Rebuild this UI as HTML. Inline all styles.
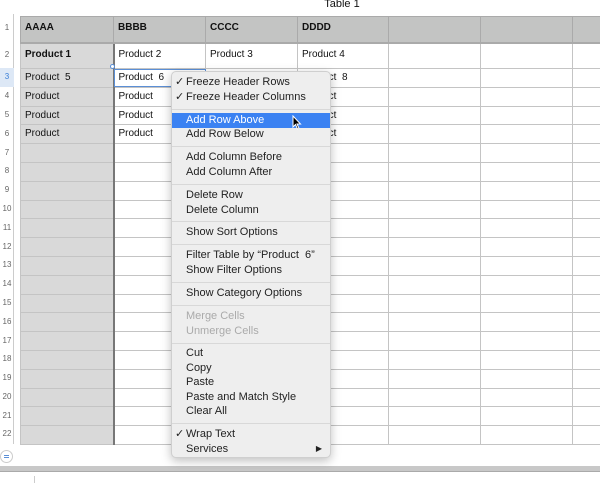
<!DOCTYPE html>
<html><head><style>
*{margin:0;padding:0;box-sizing:border-box}
body{width:600px;height:483px;background:#fff;font-family:"Liberation Sans",sans-serif;position:relative;overflow:hidden;font-size:10px;color:#111}
.abs{position:absolute}
table{position:absolute;left:20px;top:16px;border-collapse:collapse;table-layout:fixed;width:644px}
td{border:1px solid #c4c4c4;padding:0 4px;vertical-align:top;white-space:nowrap;overflow:hidden;height:18.8px;line-height:17px}
td.h{background:#c3c4c3;font-weight:bold;height:26px;line-height:22px;border-bottom:2px solid #888;border-color:#aaa}
td.c1{background:#d9d9d9}
td.c2{border-left:2px solid #777}
tr.r2 td{height:26px;line-height:22px}
.rn{position:absolute;left:0;width:14px;text-align:center;font-size:8px;color:#666}
.menu{position:absolute;left:171px;top:71px;width:160px;height:387px;background:#eeeeee;border:1px solid #cfcfcf;border-radius:5px;box-shadow:0 3px 10px rgba(0,0,0,.25);font-size:11px;color:#222}
.mi{position:absolute;left:0;right:0;height:14.5px;line-height:14.5px;padding-left:14px}
.mi.d{color:#aaa}
.sep{position:absolute;left:0;right:0;height:1px;background:#d8d8d8}
.hl{background:#3b82f2;color:#fff}
</style></head><body>
<div class="abs" style="top:-2px;left:42px;width:600px;text-align:center;font-size:11px">Table 1</div>
<div class="abs" style="left:0;top:14px;width:14px;height:430px;border-right:1px solid #ccc"></div>
<div class="abs" style="left:0;top:68px;width:14px;height:19px;background:#dde8f6"></div>
<table>
<colgroup><col style="width:93px"><col style="width:92px"><col style="width:92px"><col style="width:91px"><col style="width:92px"><col style="width:92px"><col style="width:92px"></colgroup>
<tr><td class="h">AAAA</td><td class="h">BBBB</td><td class="h">CCCC</td><td class="h">DDDD</td><td class="h"></td><td class="h"></td><td class="h"></td></tr>
<tr class="r2"><td class="c1" style="font-weight:bold">Product 1</td><td class="c2">Product 2</td><td>Product 3</td><td>Product 4</td><td></td><td></td><td></td></tr>
<tr><td class="c1">Product&nbsp; 5</td><td class="c2" style="outline:1px solid #5b8fd6;outline-offset:-1px">Product&nbsp; 6</td><td></td><td>Product&nbsp; 8</td><td></td><td></td><td></td></tr>
<tr><td class="c1">Product</td><td class="c2">Product</td><td></td><td>Product</td><td></td><td></td><td></td></tr>
<tr><td class="c1">Product</td><td class="c2">Product</td><td></td><td>Product</td><td></td><td></td><td></td></tr>
<tr><td class="c1">Product</td><td class="c2">Product</td><td></td><td>Product</td><td></td><td></td><td></td></tr>
<tr><td class="c1"></td><td class="c2"></td><td></td><td></td><td></td><td></td><td></td></tr>
<tr><td class="c1"></td><td class="c2"></td><td></td><td></td><td></td><td></td><td></td></tr>
<tr><td class="c1"></td><td class="c2"></td><td></td><td></td><td></td><td></td><td></td></tr>
<tr><td class="c1"></td><td class="c2"></td><td></td><td></td><td></td><td></td><td></td></tr>
<tr><td class="c1"></td><td class="c2"></td><td></td><td></td><td></td><td></td><td></td></tr>
<tr><td class="c1"></td><td class="c2"></td><td></td><td></td><td></td><td></td><td></td></tr>
<tr><td class="c1"></td><td class="c2"></td><td></td><td></td><td></td><td></td><td></td></tr>
<tr><td class="c1"></td><td class="c2"></td><td></td><td></td><td></td><td></td><td></td></tr>
<tr><td class="c1"></td><td class="c2"></td><td></td><td></td><td></td><td></td><td></td></tr>
<tr><td class="c1"></td><td class="c2"></td><td></td><td></td><td></td><td></td><td></td></tr>
<tr><td class="c1"></td><td class="c2"></td><td></td><td></td><td></td><td></td><td></td></tr>
<tr><td class="c1"></td><td class="c2"></td><td></td><td></td><td></td><td></td><td></td></tr>
<tr><td class="c1"></td><td class="c2"></td><td></td><td></td><td></td><td></td><td></td></tr>
<tr><td class="c1"></td><td class="c2"></td><td></td><td></td><td></td><td></td><td></td></tr>
<tr><td class="c1"></td><td class="c2"></td><td></td><td></td><td></td><td></td><td></td></tr>
<tr><td class="c1"></td><td class="c2"></td><td></td><td></td><td></td><td></td><td></td></tr>
</table>
<div class="rn" style="top:23px">1</div><div class="rn" style="top:50px">2</div>
<div class="rn" style="top:72px;color:#3b7fd6">3</div><div class="rn" style="top:91px">4</div><div class="rn" style="top:110px">5</div><div class="rn" style="top:129px">6</div><div class="rn" style="top:148px">7</div><div class="rn" style="top:166px">8</div><div class="rn" style="top:185px">9</div><div class="rn" style="top:204px">10</div><div class="rn" style="top:223px">11</div><div class="rn" style="top:242px">12</div><div class="rn" style="top:260px">13</div><div class="rn" style="top:279px">14</div><div class="rn" style="top:298px">15</div><div class="rn" style="top:317px">16</div><div class="rn" style="top:336px">17</div><div class="rn" style="top:354px">18</div><div class="rn" style="top:373px">19</div><div class="rn" style="top:392px">20</div><div class="rn" style="top:411px">21</div><div class="rn" style="top:429px">22</div>
<div class="abs" style="left:110px;top:64px;width:5px;height:5px;border:1px solid #5b8fd6;border-radius:50%;background:#fff"></div>
<div class="abs" style="left:0;top:450px;width:13px;height:13px;border:1px solid #ccc;border-radius:50%;background:#fff"><div style="margin:4px 3px;height:3px;border-top:1px solid #5b8fd6;border-bottom:1px solid #5b8fd6"></div></div>
<div class="abs" style="left:0;top:466px;width:600px;height:6px;background:#c8c8c8;border-bottom:1px solid #aaa"></div>
<div class="abs" style="left:34px;top:476px;width:1px;height:7px;background:#ccc"></div>
<div class="menu">
<div class="mi" style="top:3px"><span style="position:absolute;left:3px">✓</span>Freeze Header Rows</div>
<div class="mi" style="top:17.5px"><span style="position:absolute;left:3px">✓</span>Freeze Header Columns</div>
<div class="sep" style="top:37px"></div>
<div class="mi hl" style="top:41px">Add Row Above</div>
<div class="mi" style="top:55px">Add Row Below</div>
<div class="sep" style="top:74px"></div>
<div class="mi" style="top:78px">Add Column Before</div>
<div class="mi" style="top:92.5px">Add Column After</div>
<div class="sep" style="top:112px"></div>
<div class="mi" style="top:116px">Delete Row</div>
<div class="mi" style="top:130.5px">Delete Column</div>
<div class="sep" style="top:149px"></div>
<div class="mi" style="top:153px">Show Sort Options</div>
<div class="sep" style="top:172px"></div>
<div class="mi" style="top:176px">Filter Table by “Product&nbsp; 6”</div>
<div class="mi" style="top:190.5px">Show Filter Options</div>
<div class="sep" style="top:210px"></div>
<div class="mi" style="top:214px">Show Category Options</div>
<div class="sep" style="top:233px"></div>
<div class="mi d" style="top:237px">Merge Cells</div>
<div class="mi d" style="top:251.5px">Unmerge Cells</div>
<div class="sep" style="top:271px"></div>
<div class="mi" style="top:274px">Cut</div>
<div class="mi" style="top:288.5px">Copy</div>
<div class="mi" style="top:303px">Paste</div>
<div class="mi" style="top:317.5px">Paste and Match Style</div>
<div class="mi" style="top:332px">Clear All</div>
<div class="sep" style="top:351px"></div>
<div class="mi" style="top:355px"><span style="position:absolute;left:3px">✓</span>Wrap Text</div>
<div class="mi" style="top:369.5px">Services<span style="position:absolute;right:8px;font-size:8px">▶</span></div>
</div>
<svg class="abs" style="left:292px;top:115px" width="10" height="15" viewBox="0 0 10 15"><path d="M1 1 L1 12 L3.5 9.5 L5.5 14 L7 13.3 L5 9 L8.5 9 Z" fill="#000" stroke="#fff" stroke-width="1"/></svg>
</body></html>
